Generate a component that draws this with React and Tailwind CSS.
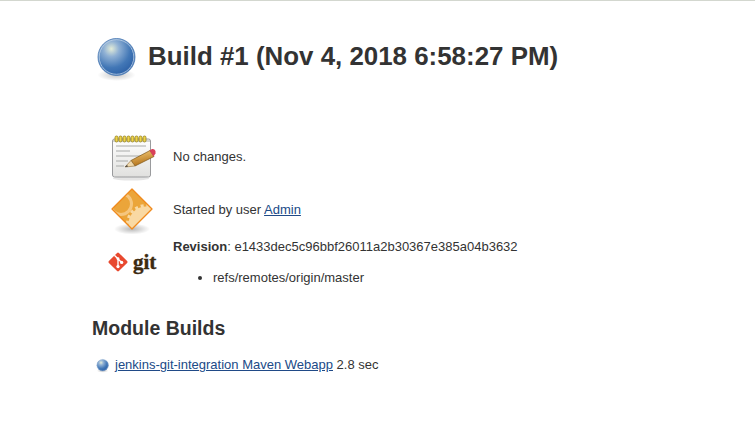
import React from 'react'

const Ball = ({ size, id }) => (
  <svg width={size} height={size} viewBox="0 0 48 48" className="shrink-0">
    <defs>
      <radialGradient id={id} cx="0.36" cy="0.28" r="0.75">
        <stop offset="0" stopColor="#e3ecd8" />
        <stop offset="0.28" stopColor="#8fb0d4" />
        <stop offset="0.68" stopColor="#4277b6" />
        <stop offset="1" stopColor="#2c60a6" />
      </radialGradient>
      <radialGradient id={`${id}-s`} cx="0.5" cy="0.5" r="0.5">
        <stop offset="0" stopColor="#000" stopOpacity="0.22" />
        <stop offset="1" stopColor="#000" stopOpacity="0" />
      </radialGradient>
    </defs>
    <ellipse cx="24.5" cy="41" rx="19" ry="6" fill={`url(#${id}-s)`} />
    <circle cx="24.5" cy="23" r="18.5" fill={`url(#${id})`} stroke="#4a7ab4" strokeWidth="0.8" />
    <circle cx="24.5" cy="23" r="17.3" fill="none" stroke="#bcd0e6" strokeWidth="0.8" />
  </svg>
)

const NotepadIcon = () => (
  <svg width="48" height="48" viewBox="0 0 48 48">
    <defs>
      <linearGradient id="pad" x1="0" y1="0" x2="0" y2="1">
        <stop offset="0" stopColor="#ffffff" />
        <stop offset="1" stopColor="#e0e0de" />
      </linearGradient>
      <linearGradient id="pencil" x1="0" y1="0" x2="0.3" y2="1">
        <stop offset="0" stopColor="#f7cf7c" />
        <stop offset="1" stopColor="#b3721a" />
      </linearGradient>
    </defs>
    <ellipse cx="23" cy="45.5" rx="18" ry="2" fill="#000" opacity="0.1" />
    <rect x="4.5" y="6" width="38" height="38" rx="2" fill="url(#pad)" stroke="#9a9b9d" />
    <rect x="5" y="6.5" width="37" height="2.5" fill="#b9bab8" opacity="0.6" />
    {[7, 11, 15, 19, 23, 27, 31, 35].map((x) => (
      <rect key={x} x={x} y="3" width="3" height="6" rx="1.4" fill="#ecd24a" stroke="#8a7716" strokeWidth="0.7" />
    ))}
    {[[13, 38], [18, 22], [23, 34], [28, 20], [33, 16]].map(([y, x2]) => (
      <line key={y} x1="8" x2={x2} y1={y} y2={y} stroke="#a8aaa8" strokeWidth="1" />
    ))}
    <path d="M23 27.5 L42 17.5 L46 23.5 L27 33 Z" fill="url(#pencil)" stroke="#7c5416" strokeWidth="0.7" />
    <path d="M17 34 L23 27.5 L27 33 Z" fill="#efd9ae" stroke="#7c5416" strokeWidth="0.5" />
    <path d="M17 34 L19 32 L20 33.5 Z" fill="#333" />
    <path d="M41.5 17.5 L44 16 Q46.5 15.5 47.5 18 L47.5 20.5 L45.5 23.5 Z" fill="#d9415a" />
  </svg>
)

const BuildIcon = () => (
  <svg width="48" height="52" viewBox="0 0 48 52">
    <defs>
      <radialGradient id="shadow" cx="0.5" cy="0.5" r="0.5">
        <stop offset="0" stopColor="#000" stopOpacity="0.28" />
        <stop offset="1" stopColor="#000" stopOpacity="0" />
      </radialGradient>
      <clipPath id="diamond">
        <path d="M24 5 L44 25 L24 45 L4 25 Z" />
      </clipPath>
    </defs>
    <ellipse cx="24" cy="45" rx="18" ry="5.5" fill="url(#shadow)" />
    <path d="M24 5 L44 25 L24 45 L4 25 Z" fill="#eba53a" />
    <g clipPath="url(#diamond)">
      <circle cx="13" cy="20" r="10.5" fill="none" stroke="#f5c67f" strokeWidth="3" />
      <circle cx="38" cy="40" r="18.5" fill="none" stroke="#f9d9a3" strokeWidth="3" strokeDasharray="3 2.8" />
      <circle cx="38" cy="40" r="17.5" fill="#f9d9a3" />
    </g>
    <path d="M24 5 L44 25 L24 45 L4 25 Z" fill="none" stroke="#f08a1d" strokeWidth="1.3" strokeLinejoin="round" />
  </svg>
)

const GitLogo = () => (
  <div className="flex items-center gap-[5px] h-[20px]">
    <svg width="20" height="20" viewBox="0 0 22 22" className="shrink-0">
      <path d="M1 10 L10 1 Q11 0 12 1 L21 10 Q22 11 21 12 L12 21 Q11 22 10 21 L1 12 Q0 11 1 10 Z" fill="#e8492f" />
      <path d="M7 3.5 L15 11.5 M11 7.5 L11 16" stroke="#fff" strokeWidth="1.5" fill="none" />
      <circle cx="11" cy="16" r="1.8" fill="#fff" />
      <circle cx="15" cy="11.5" r="1.8" fill="#fff" />
      <circle cx="11" cy="7.5" r="1.6" fill="#fff" />
    </svg>
    <span className="font-['Liberation_Serif',serif] font-bold text-[21px] leading-none text-[#3c2a10] [-webkit-text-stroke:0.4px_#3c2a10]">git</span>
  </div>
)

const App = () => {
  return (
    <div className="min-h-[443px] bg-white border-t border-[#d3d7cf] text-[#333] font-['Liberation_Sans',Arial,sans-serif] text-[13px] overflow-hidden">
      <div className="pl-[92px] pt-[33px]">
        <div className="flex items-center gap-[8px] h-[48px]">
          <Ball size={48} id="ball-big" />
          <h1 className="text-[25.9px] font-bold leading-none whitespace-nowrap pb-[2px]">Build #1 (Nov 4, 2018 6:58:27 PM)</h1>
        </div>

        <div className="mt-[51px] pl-[16px] flex items-center gap-[17px] h-[48px]">
          <NotepadIcon />
          <div>No changes.</div>
        </div>
        <div className="mt-[5px] pl-[16px] flex items-center gap-[17px] h-[48px]">
          <BuildIcon />
          <div>
            Started by user <a href="#" className="underline text-[#204a87]">Admin</a>
          </div>
        </div>
        <div className="mt-[3px] pl-[16px] flex gap-[17px]">
          <div className="w-[48px] shrink-0 pt-[15px]">
            <GitLogo />
          </div>
          <div>
            <div><b>Revision</b>: e1433dec5c96bbf26011a2b30367e385a04b3632</div>
            <ul className="list-disc pl-[40px] mt-[11px]">
              <li>refs/remotes/origin/master</li>
            </ul>
          </div>
        </div>

        <h2 className="mt-[29px] text-[19.5px] font-bold leading-[24px]">Module Builds</h2>
        <div className="mt-[17px] pl-[3px] flex items-center gap-[5px] h-[16px]">
          <Ball size={15} id="ball-small" />
          <div><a href="#" className="underline text-[#204a87]">jenkins-git-integration Maven Webapp</a> 2.8 sec</div>
        </div>
      </div>
    </div>
  )
}

export default App
